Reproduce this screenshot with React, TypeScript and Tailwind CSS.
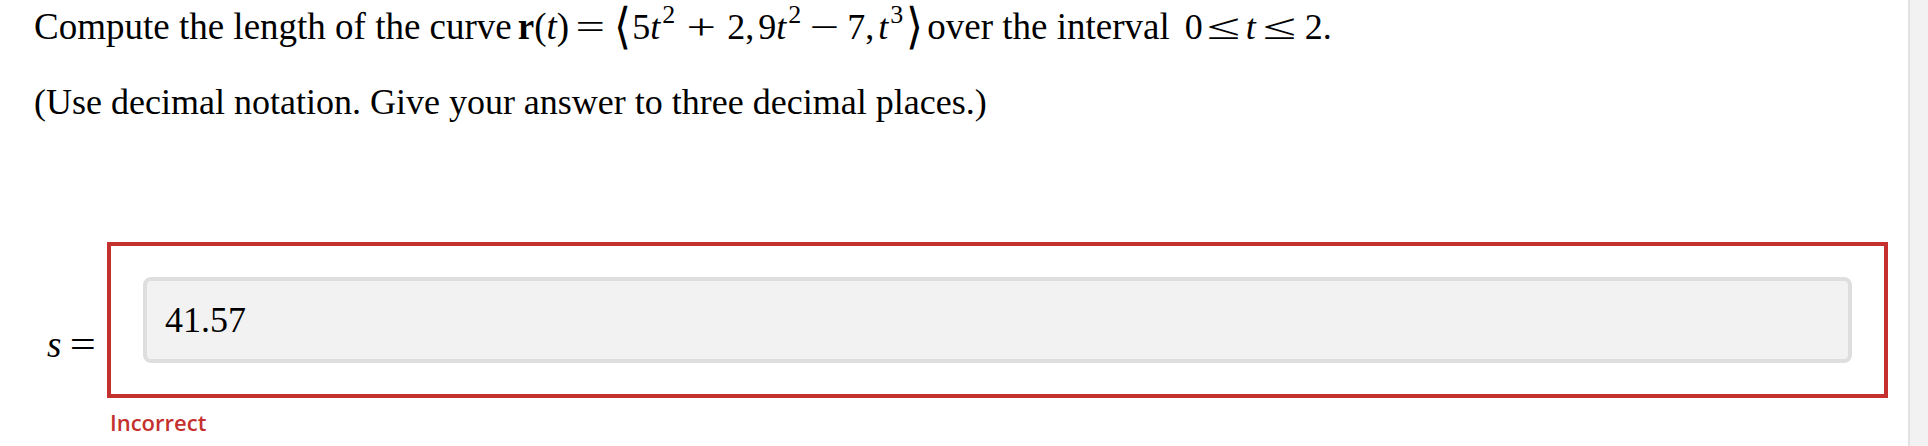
import React from "react";

const serif = { fontFamily: '"Liberation Serif", "Times New Roman", serif' };
const dejavu = { fontFamily: '"DejaVu Sans", sans-serif' };

function Sup({ children }: { children: React.ReactNode }) {
  return (
    <span className="ml-[2px] inline-block shrink-0">
      <span className="relative -top-[16px] text-[26px] leading-[0]">{children}</span>
    </span>
  );
}

function Op({ w, children, scale = "scale-x-[1.45]" }: { w: number; children: React.ReactNode; scale?: string }) {
  return (
    <span className="inline-flex shrink-0 justify-center" style={{ width: w }}>
      <span className={"inline-block origin-center " + scale}>{children}</span>
    </span>
  );
}

function Bracket({ w, children }: { w: number; children: React.ReactNode }) {
  return (
    <span className="inline-flex shrink-0 justify-center" style={{ width: w }}>
      <span
        className="inline-block origin-center scale-x-[1.2] scale-y-[1.35] font-extralight leading-[0] text-[36px]"
        style={dejavu}
      >
        {children}
      </span>
    </span>
  );
}

export default function App() {
  return (
    <div className="flex h-[446px] w-[1928px] overflow-hidden bg-white text-black">
      <div className="flex-1 pl-[34px] pt-[7px]" style={serif}>
        <div className="flex h-[40px] items-baseline whitespace-nowrap text-[36px] leading-[40px]">
          <span className="text-[37px]">Compute the length of the curve</span>
          <span className="ml-[6px] text-[37px] font-bold">r</span>
          <span className="text-[37px]">(</span>
          <span className="text-[37px] italic">t</span>
          <span className="text-[37px]">)</span>
          <Op w={42}>=</Op>
          <Bracket w={21}>⟨</Bracket>
          <span>5</span>
          <span className="italic">t</span>
          <Sup>2</Sup>
          <Op w={52}>+</Op>
          <span>2,</span>
          <span className="ml-[4px]">9</span>
          <span className="italic">t</span>
          <Sup>2</Sup>
          <Op w={46}>−</Op>
          <span>7,</span>
          <span className="ml-[4px] italic">t</span>
          <Sup>3</Sup>
          <Bracket w={21}>⟩</Bracket>
          <span className="ml-[3px] text-[37px]">over the interval</span>
          <span className="ml-[15px]">0</span>
          <Op w={43} scale="scale-x-[1.7]">≤</Op>
          <span className="italic">t</span>
          <Op w={48} scale="scale-x-[1.7]">≤</Op>
          <span className="ml-[1px]">2.</span>
        </div>
        <div className="mt-[35px] h-[40px] whitespace-nowrap text-[36px] leading-[40px]">
          (Use decimal notation. Give your answer to three decimal places.)
        </div>
        <div className="mt-[120px] flex items-start">
          <div className="mt-[84px] flex w-[73px] items-baseline whitespace-nowrap pl-[13px] text-[37px] leading-none">
            <span className="italic">s</span>
            <span className="flex flex-1 justify-end pr-[11px]">
              <span className="inline-block origin-right scale-x-[1.25]">=</span>
            </span>
          </div>
          <div className="h-[156px] w-[1781px] border-4 border-[#c4302e] px-[32px] py-[31px]">
            <div className="flex h-[86px] items-center rounded-[8px] border-4 border-[#dedede] bg-[#f2f2f2] pl-[18px] text-[36px]">
              41.57
            </div>
          </div>
        </div>
        <div
          className="ml-[76px] mt-[13px] text-[22px] font-semibold leading-none text-[#c4302e]"
          style={{ fontFamily: '"Open Sans", sans-serif' }}
        >
          Incorrect
        </div>
      </div>
      <div className="w-[20px] border-l-2 border-[#e2e2e2] bg-[#f2f2f2]" />
    </div>
  );
}
